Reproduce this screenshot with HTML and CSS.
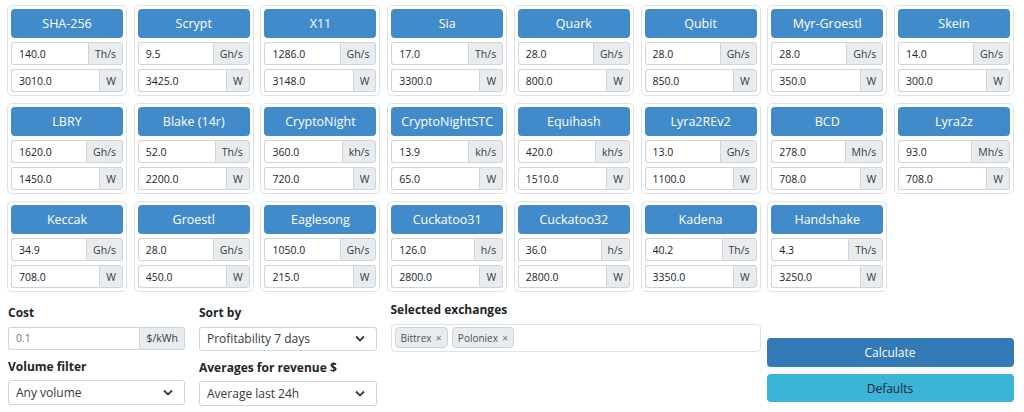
FILE: index.html
```html
<!DOCTYPE html>
<html lang="en">
<head>
  <meta charset="UTF-8" />
  <meta name="viewport" content="width=device-width, initial-scale=1.0"/>
  <title>Mining profitability</title>
  <link rel="stylesheet" href="styles.css">
</head>
<body>
  <div class="algos">
    <div class="algo"><button class="algo-btn">SHA-256</button>
      <div class="group"><input value="140.0"><span class="addon">Th/s</span></div>
      <div class="group"><input value="3010.0"><span class="addon">W</span></div></div>
    <div class="algo"><button class="algo-btn">Scrypt</button>
      <div class="group"><input value="9.5"><span class="addon">Gh/s</span></div>
      <div class="group"><input value="3425.0"><span class="addon">W</span></div></div>
    <div class="algo"><button class="algo-btn">X11</button>
      <div class="group"><input value="1286.0"><span class="addon">Gh/s</span></div>
      <div class="group"><input value="3148.0"><span class="addon">W</span></div></div>
    <div class="algo"><button class="algo-btn">Sia</button>
      <div class="group"><input value="17.0"><span class="addon">Th/s</span></div>
      <div class="group"><input value="3300.0"><span class="addon">W</span></div></div>
    <div class="algo"><button class="algo-btn">Quark</button>
      <div class="group"><input value="28.0"><span class="addon">Gh/s</span></div>
      <div class="group"><input value="800.0"><span class="addon">W</span></div></div>
    <div class="algo"><button class="algo-btn">Qubit</button>
      <div class="group"><input value="28.0"><span class="addon">Gh/s</span></div>
      <div class="group"><input value="850.0"><span class="addon">W</span></div></div>
    <div class="algo"><button class="algo-btn">Myr-Groestl</button>
      <div class="group"><input value="28.0"><span class="addon">Gh/s</span></div>
      <div class="group"><input value="350.0"><span class="addon">W</span></div></div>
    <div class="algo"><button class="algo-btn">Skein</button>
      <div class="group"><input value="14.0"><span class="addon">Gh/s</span></div>
      <div class="group"><input value="300.0"><span class="addon">W</span></div></div>

    <div class="algo"><button class="algo-btn">LBRY</button>
      <div class="group"><input value="1620.0"><span class="addon">Gh/s</span></div>
      <div class="group"><input value="1450.0"><span class="addon">W</span></div></div>
    <div class="algo"><button class="algo-btn">Blake (14r)</button>
      <div class="group"><input value="52.0"><span class="addon">Th/s</span></div>
      <div class="group"><input value="2200.0"><span class="addon">W</span></div></div>
    <div class="algo"><button class="algo-btn">CryptoNight</button>
      <div class="group"><input value="360.0"><span class="addon">kh/s</span></div>
      <div class="group"><input value="720.0"><span class="addon">W</span></div></div>
    <div class="algo"><button class="algo-btn">CryptoNightSTC</button>
      <div class="group"><input value="13.9"><span class="addon">kh/s</span></div>
      <div class="group"><input value="65.0"><span class="addon">W</span></div></div>
    <div class="algo"><button class="algo-btn">Equihash</button>
      <div class="group"><input value="420.0"><span class="addon">kh/s</span></div>
      <div class="group"><input value="1510.0"><span class="addon">W</span></div></div>
    <div class="algo"><button class="algo-btn">Lyra2REv2</button>
      <div class="group"><input value="13.0"><span class="addon">Gh/s</span></div>
      <div class="group"><input value="1100.0"><span class="addon">W</span></div></div>
    <div class="algo"><button class="algo-btn">BCD</button>
      <div class="group"><input value="278.0"><span class="addon">Mh/s</span></div>
      <div class="group"><input value="708.0"><span class="addon">W</span></div></div>
    <div class="algo"><button class="algo-btn">Lyra2z</button>
      <div class="group"><input value="93.0"><span class="addon">Mh/s</span></div>
      <div class="group"><input value="708.0"><span class="addon">W</span></div></div>

    <div class="algo"><button class="algo-btn">Keccak</button>
      <div class="group"><input value="34.9"><span class="addon">Gh/s</span></div>
      <div class="group"><input value="708.0"><span class="addon">W</span></div></div>
    <div class="algo"><button class="algo-btn">Groestl</button>
      <div class="group"><input value="28.0"><span class="addon">Gh/s</span></div>
      <div class="group"><input value="450.0"><span class="addon">W</span></div></div>
    <div class="algo"><button class="algo-btn">Eaglesong</button>
      <div class="group"><input value="1050.0"><span class="addon">Gh/s</span></div>
      <div class="group"><input value="215.0"><span class="addon">W</span></div></div>
    <div class="algo"><button class="algo-btn">Cuckatoo31</button>
      <div class="group"><input value="126.0"><span class="addon">h/s</span></div>
      <div class="group"><input value="2800.0"><span class="addon">W</span></div></div>
    <div class="algo"><button class="algo-btn">Cuckatoo32</button>
      <div class="group"><input value="36.0"><span class="addon">h/s</span></div>
      <div class="group"><input value="2800.0"><span class="addon">W</span></div></div>
    <div class="algo"><button class="algo-btn">Kadena</button>
      <div class="group"><input value="40.2"><span class="addon">Th/s</span></div>
      <div class="group"><input value="3350.0"><span class="addon">W</span></div></div>
    <div class="algo"><button class="algo-btn">Handshake</button>
      <div class="group"><input value="4.3"><span class="addon">Th/s</span></div>
      <div class="group"><input value="3250.0"><span class="addon">W</span></div></div>
  </div>

  <div class="options">
    <div class="col col-cost">
      <label class="field-label">Cost</label>
      <div class="group cost-group"><input class="cost-input" value="0.1"><span class="addon">$/kWh</span></div>
      <label class="field-label second">Volume filter</label>
      <div class="select"><span>Any volume</span>
        <svg width="10" height="7" viewBox="0 0 10 7"><path d="M1 1.5 L5 5.5 L9 1.5" fill="none" stroke="#343a40" stroke-width="1.8"/></svg></div>
    </div>
    <div class="col col-sort">
      <label class="field-label">Sort by</label>
      <div class="select"><span>Profitability 7 days</span>
        <svg width="10" height="7" viewBox="0 0 10 7"><path d="M1 1.5 L5 5.5 L9 1.5" fill="none" stroke="#343a40" stroke-width="1.8"/></svg></div>
      <label class="field-label second">Averages for revenue $</label>
      <div class="select"><span>Average last 24h</span>
        <svg width="10" height="7" viewBox="0 0 10 7"><path d="M1 1.5 L5 5.5 L9 1.5" fill="none" stroke="#343a40" stroke-width="1.8"/></svg></div>
    </div>
    <div class="col col-exchanges">
      <label class="field-label">Selected exchanges</label>
      <div class="tags">
        <span class="tag">Bittrex <span class="tag-x">×</span></span>
        <span class="tag">Poloniex <span class="tag-x">×</span></span>
      </div>
    </div>
    <div class="col col-actions">
      <button class="btn btn-calc">Calculate</button>
      <button class="btn btn-defaults">Defaults</button>
    </div>
  </div>
</body>
</html>
```

FILE: styles.css
```css
body {
  margin: 0;
  padding: 5px 10px 0 7px;
  font-family: "Open Sans", "Noto Sans", sans-serif;
  color: #212529;
  background: #fff;
}

.algos {
  display: grid;
  grid-template-columns: repeat(8, minmax(0, 1fr));
  gap: 7px 6.7px;
}

.algo {
  border: 1px solid #dee2e6;
  border-radius: 5px;
  padding: 3px;
  display: flex;
  flex-direction: column;
  gap: 4px;
  min-width: 0;
}

.algo-btn {
  height: 29px;
  border: none;
  border-radius: 4px;
  background-color: #428bca;
  color: #fff;
  font-family: inherit;
  font-size: 12.5px;
  padding: 0;
  cursor: pointer;
  white-space: nowrap;
}

.group {
  display: flex;
  height: 23px;
}

.group input {
  flex: 1;
  width: 0;
  min-width: 0;
  border: 1px solid #ced4da;
  border-right: none;
  border-radius: 3px 0 0 3px;
  padding: 0 7px;
  font-family: inherit;
  font-size: 10.5px;
  color: #212529;
  outline: none;
}

.addon {
  display: flex;
  align-items: center;
  padding: 0 6px;
  background-color: #e9ecef;
  border: 1px solid #ced4da;
  border-radius: 0 3px 3px 0;
  font-size: 10.5px;
  color: #343a40;
}

/* === Options === */
.options {
  display: flex;
  margin-top: 9px;
  padding-left: 1px;
}

.col {
  display: flex;
  flex-direction: column;
}

.col-cost { width: 177px; padding-top: 3px; }
.col-sort { width: 178px; margin-left: 14px; padding-top: 3px; }
.col-exchanges { width: 370px; margin-left: 13.5px; }
.col-actions { width: 247px; margin-left: 6px; padding-top: 37px; gap: 7px; }

.field-label {
  font-size: 12px;
  font-weight: 700;
  line-height: 17px;
  margin-bottom: 5.5px;
  color: #212529;
}

.field-label.second {
  margin-top: 8px;
  margin-bottom: 5px;
}

.cost-group { height: 23px; }

.cost-input {
  color: #6c757d !important;
}

.select {
  height: 24px;
  border: 1px solid #ced4da;
  border-radius: 3px;
  display: flex;
  align-items: center;
  justify-content: space-between;
  padding: 0 11px 0 7px;
  font-size: 12px;
  color: #343a40;
  box-sizing: border-box;
}

.col-cost .select { height: 25px; }
.col-sort .select:last-child { height: 25px; }

.tags {
  height: 28px;
  box-sizing: border-box;
  border: 1px solid #dee2e6;
  border-radius: 4px;
  display: flex;
  align-items: center;
  gap: 4px;
  padding: 0 3px;
}

.tag {
  display: inline-flex;
  align-items: center;
  height: 21px;
  box-sizing: border-box;
  padding: 0 5px;
  background-color: #e9ecef;
  border: 1px solid #ced4da;
  border-radius: 4px;
  font-size: 10px;
  color: #495057;
}

.tag-x {
  margin-left: 4px;
  font-size: 11px;
  color: #6c757d;
}

.btn {
  border: none;
  border-radius: 4px;
  font-family: inherit;
  font-size: 12px;
  cursor: pointer;
}

.btn-calc {
  height: 29px;
  background-color: #337ab7;
  color: #fff;
}

.btn-defaults {
  height: 28px;
  background-color: #3bb4d8;
  color: #212529;
}
```
